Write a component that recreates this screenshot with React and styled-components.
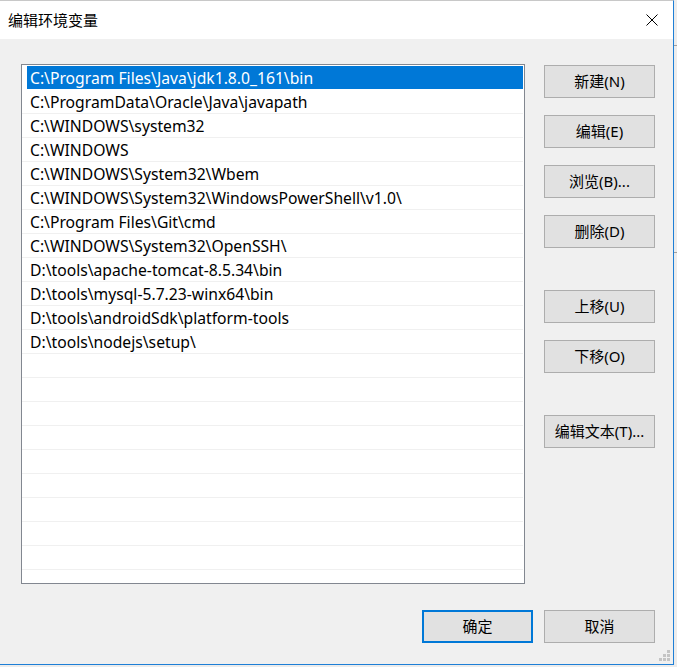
import styled, { createGlobalStyle } from 'styled-components'

const GlobalStyle = createGlobalStyle`
  html, body {
    margin: 0;
    padding: 0;
    background: #ececec;
  }
  body {
    font-family: "Noto Sans", "Noto Sans CJK SC", sans-serif;
    font-size: 15px;
  }
`

const Page = styled.div`
  width: 677px;
  height: 667px;
  overflow: hidden;
  background: linear-gradient(#ececec 0 45px, #a0a0a0 45px 46px, #ececec 46px 252px, #a0a0a0 252px 253px, #ececec 253px);
`

const Window = styled.div`
  width: 673px;
  border-top: 1px solid #c8c8c8;
  border-right: 1px solid #1e7fd6;
  border-bottom: 1px solid #1e7fd6;
  position: relative;
`

const TitleBar = styled.div`
  height: 38px;
  background: #fff;
  display: flex;
  align-items: center;
  justify-content: space-between;
  padding: 0 15px 0 8px;
  color: #000;
`

const Title = styled.span`
  font-family: "Noto Sans CJK SC", sans-serif;
  font-size: 15px;
  line-height: 1;
  margin-top: -1px;
`

const Body = styled.div`
  height: 625px;
  box-sizing: border-box;
  background: #f0f0f0;
  padding: 25px 18px 21px 21px;
  display: flex;
  flex-direction: column;
`

const Main = styled.div`
  display: flex;
  gap: 19px;
  height: 520px;
`

const ListBox = styled.div`
  width: 504px;
  height: 520px;
  box-sizing: border-box;
  border: 1px solid #828790;
  background: #fff;
  padding: 1px 1px 0 0;
  overflow: hidden;
`

const Row = styled.div`
  height: 24px;
  box-sizing: border-box;
  padding-left: 5px;
  display: flex;
  border-bottom: 1px solid ${(p) => (p.$selected ? 'transparent' : '#f0f0f0')};
`

const Cell = styled.div`
  flex: 1;
  height: 23px;
  display: flex;
  align-items: center;
  padding-left: 3px;
  box-sizing: border-box;
  white-space: nowrap;
  font-family: "Noto Sans", sans-serif;
  font-size: 15.7px;
  color: ${(p) => (p.$selected ? '#fff' : '#000')};
  background: ${(p) => (p.$selected ? '#0078d7' : 'transparent')};
`

const Side = styled.div`
  display: flex;
  flex-direction: column;
  padding-top: 1px;
`

const Button = styled.button`
  width: 111px;
  height: 33px;
  box-sizing: border-box;
  border: ${(p) => (p.$primary ? '2px solid #0078d7' : '1px solid #adadad')};
  background: #e1e1e1;
  color: #000;
  font-family: "Noto Sans", "Noto Sans CJK SC", sans-serif;
  font-size: 15px;
  line-height: 1;
  padding: 0 0 1px;
  margin-top: ${(p) => p.$gap || 0}px;
  cursor: default;
`

const Footer = styled.div`
  margin-top: 26px;
  display: flex;
  justify-content: flex-end;
  gap: 11px;
`

const Grip = styled.svg`
  position: absolute;
  right: 2px;
  bottom: 2px;
`

const paths = [
  'C:\\Program Files\\Java\\jdk1.8.0_161\\bin',
  'C:\\ProgramData\\Oracle\\Java\\javapath',
  'C:\\WINDOWS\\system32',
  'C:\\WINDOWS',
  'C:\\WINDOWS\\System32\\Wbem',
  'C:\\WINDOWS\\System32\\WindowsPowerShell\\v1.0\\',
  'C:\\Program Files\\Git\\cmd',
  'C:\\WINDOWS\\System32\\OpenSSH\\',
  'D:\\tools\\apache-tomcat-8.5.34\\bin',
  'D:\\tools\\mysql-5.7.23-winx64\\bin',
  'D:\\tools\\androidSdk\\platform-tools',
  'D:\\tools\\nodejs\\setup\\',
]

const rows = [...paths, ...Array(21 - paths.length).fill('')]

const sideButtons = [
  { label: '新建(N)', gap: 0 },
  { label: '编辑(E)', gap: 17 },
  { label: '浏览(B)...', gap: 17 },
  { label: '删除(D)', gap: 17 },
  { label: '上移(U)', gap: 42 },
  { label: '下移(O)', gap: 17 },
  { label: '编辑文本(T)...', gap: 42 },
]

function CloseIcon() {
  return (
    <svg width="12" height="12" viewBox="0 0 12 12">
      <path d="M0.5 0.5 L11.5 11.5 M11.5 0.5 L0.5 11.5" stroke="#000" strokeWidth="1" />
    </svg>
  )
}

export default function App() {
  return (
    <Page>
      <GlobalStyle />
      <Window>
        <TitleBar>
          <Title>编辑环境变量</Title>
          <CloseIcon />
        </TitleBar>
        <Body>
          <Main>
            <ListBox>
              {rows.map((text, i) => (
                <Row key={i} $selected={i === 0}>
                  <Cell $selected={i === 0}>{text}</Cell>
                </Row>
              ))}
            </ListBox>
            <Side>
              {sideButtons.map((b) => (
                <Button key={b.label} $gap={b.gap}>
                  {b.label}
                </Button>
              ))}
            </Side>
          </Main>
          <Footer>
            <Button $primary>确定</Button>
            <Button>取消</Button>
          </Footer>
        </Body>
        <Grip width="12" height="12" viewBox="0 0 12 12">
          <rect x="8" y="0" width="3" height="3" fill="#c4c4c4" />
          <rect x="4" y="4" width="3" height="3" fill="#c4c4c4" />
          <rect x="8" y="4" width="3" height="3" fill="#c4c4c4" />
          <rect x="0" y="8" width="3" height="3" fill="#c4c4c4" />
          <rect x="4" y="8" width="3" height="3" fill="#c4c4c4" />
          <rect x="8" y="8" width="3" height="3" fill="#c4c4c4" />
        </Grip>
      </Window>
    </Page>
  )
}
